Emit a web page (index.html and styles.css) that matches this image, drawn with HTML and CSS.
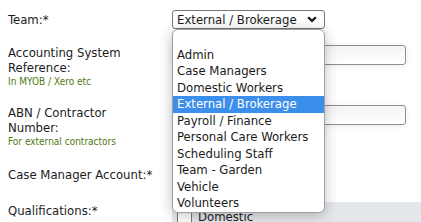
FILE: index.html
```html
<!DOCTYPE html>
<html lang="en">
<head>
    <meta charset="UTF-8">
    <title>Staff details</title>
    <link rel="stylesheet" href="styles.css">
</head>
<body>

    <div class="form">
        <div class="row row-team">
            <div class="label">Team:*</div>
            <div class="field">
                <!-- closed select, the open list sits over the rows below -->
                <div class="select">
                    <span>External / Brokerage</span>
                    <svg class="chevron" width="10" height="7" viewBox="0 0 10 7">
                        <path d="M1.2 1.2 L5 5 L8.8 1.2" fill="none" stroke="#111" stroke-width="2.2"/>
                    </svg>
                </div>
                <ul class="options">
                    <li class="blank">&nbsp;</li>
                    <li>Admin</li>
                    <li>Case Managers</li>
                    <li>Domestic Workers</li>
                    <li class="selected">External / Brokerage</li>
                    <li>Payroll / Finance</li>
                    <li>Personal Care Workers</li>
                    <li>Scheduling Staff</li>
                    <li>Team - Garden</li>
                    <li>Vehicle</li>
                    <li>Volunteers</li>
                </ul>
            </div>
        </div>

        <div class="row row-accounting">
            <div class="label">
                Accounting System Reference:
                <div class="hint">In MYOB / Xero etc</div>
            </div>
            <div class="field"><div class="input"></div></div>
        </div>

        <div class="row row-abn">
            <div class="label">
                ABN / Contractor Number:
                <div class="hint">For external contractors</div>
            </div>
            <div class="field"><div class="input"></div></div>
        </div>

        <div class="row row-manager">
            <div class="label">Case Manager Account:*</div>
            <div class="field"></div>
        </div>

        <div class="row row-quals">
            <div class="label">Qualifications:*</div>
            <div class="field">
                <div class="checks">
                    <span class="box"></span>Domestic
                </div>
            </div>
        </div>
    </div>

</body>
</html>
```
FILE: styles.css
```css
body {
    margin: 0;
    padding: 0;
    background-color: white;
    color: #1b1b1b;
    font-family: 'DejaVu Sans Condensed', 'DejaVu Sans', sans-serif;
    font-stretch: condensed;
    font-size: 13px;
    line-height: 15px;
    overflow: hidden;
}

.form {
    padding: 10px 0 0 8px;
}

.row {
    display: flex;
}

.label {
    width: 164px;
    flex-shrink: 0;
    padding-right: 18px;
    box-sizing: border-box;
}

.field {
    flex: 1;
    position: relative;
}

.row-team .label {
    padding-top: 2px;
}

.row-accounting {
    margin-top: 16px;
}

.row-abn {
    margin-top: 17px;
}

.row-manager {
    margin-top: 19px;
}

.row-quals {
    margin-top: 21px;
}

.hint {
    font-size: 10px;
    line-height: 13px;
    color: #4f7a14;
}

/* Fake select box */
.select {
    width: 153px;
    height: 19px;
    box-sizing: border-box;
    border: 1px solid #767676;
    border-radius: 3px;
    padding: 0 0 0 4px;
    display: flex;
    align-items: center;
    justify-content: space-between;
    background: white;
}

.chevron {
    margin-right: 7px;
}

/* Open option list */
.options {
    position: absolute;
    top: 19px;
    left: 0;
    width: 153px;
    height: 184px;
    margin: 0;
    padding: 0;
    list-style: none;
    background: white;
    border: 1px solid #a0a0a0;
    border-radius: 6px;
    box-shadow: 0 2px 14px rgba(0, 0, 0, 0.25);
    box-sizing: border-box;
    z-index: 10;
    overflow: hidden;
}

.options li {
    height: 16.5px;
    line-height: 16.5px;
    padding-left: 4px;
    white-space: nowrap;
}

.options .selected {
    background-color: #3b8eea;
    color: white;
}

.input {
    width: 232px;
    height: 18px;
    border: 1px solid #8f8f8f;
    border-radius: 3px;
    background: linear-gradient(#f4f4f4, #ffffff);
    box-shadow: 0 1px 6px rgba(0, 0, 0, 0.08);
}

.checks {
    margin-top: -1px;
    height: 30px;
    background-color: #e4e7eb;
    display: flex;
    align-items: flex-start;
    padding: 7px 0 0 5px;
}

.box {
    width: 13px;
    height: 13px;
    border: 1px solid #767676;
    border-radius: 2px;
    background: white;
    margin: 1px 6px 0 0;
}
```
